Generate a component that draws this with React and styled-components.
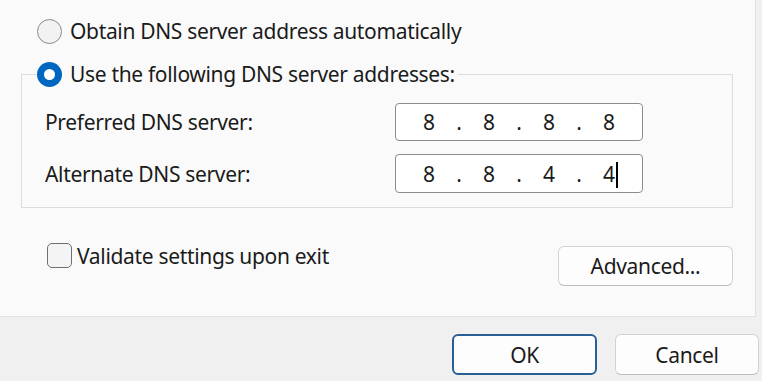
import styled, { createGlobalStyle } from "styled-components";

const GlobalStyle = createGlobalStyle`
  html, body {
    margin: 0;
    padding: 0;
    background: #f0f0f0;
  }
  * {
    box-sizing: border-box;
  }
`;

const Dialog = styled.div`
  width: 762px;
  height: 381px;
  background: #f0f0f0;
  font-family: "Noto Sans", "Open Sans", sans-serif;
  font-size: 21px;
  letter-spacing: -0.33px;
  color: #1b1b1b;
  overflow: hidden;
`;

const Page = styled.div`
  width: 756px;
  height: 317px;
  background: #fafafa;
  border-right: 1px solid #e2e2e2;
  border-bottom: 1px solid #e2e2e2;
  padding-top: 19px;
`;

const OptionRow = styled.label`
  display: flex;
  align-items: center;
  gap: 8px;
  height: 25px;
  margin-left: ${({ $indent }) => $indent || 0}px;
  padding-right: 3px;
  line-height: 25px;
`;

const Radio = styled.span`
  flex: none;
  width: 25px;
  height: 25px;
  border-radius: 50%;
  border: ${({ $checked }) => ($checked ? "none" : "1.5px solid #8a8a8a")};
  background: ${({ $checked }) => ($checked ? "#0067c0" : "#f2f2f2")};
  display: flex;
  align-items: center;
  justify-content: center;

  &::after {
    content: "";
    display: ${({ $checked }) => ($checked ? "block" : "none")};
    width: 11px;
    height: 11px;
    border-radius: 50%;
    background: #ffffff;
  }
`;

const Group = styled.fieldset`
  width: 712px;
  margin: 18px 0 0 21px;
  padding: 16px 0 14px 15px;
  border: 1px solid #dcdcdc;
  border-radius: 0;
`;

const Legend = styled.legend`
  padding: 0;
  margin: 0;
`;

const Fields = styled.div`
  display: grid;
  grid-template-columns: 350px 248px;
  row-gap: 13px;
  align-items: center;
  padding-left: 8px;
`;

const FieldLabel = styled.span`
  line-height: 38px;
`;

const IpBox = styled.div`
  height: ${({ $tall }) => ($tall ? 39 : 38)}px;
  background: #ffffff;
  border: 1.5px solid #8c8c8c;
  border-radius: 4px;
  display: flex;
  align-items: center;
  padding-left: 10px;
  letter-spacing: 0;
`;

const Octet = styled.span`
  width: 46px;
  text-align: center;
`;

const Dot = styled.span`
  width: 14px;
  text-align: center;
`;

const Caret = styled.span`
  display: inline-block;
  width: 2px;
  height: 26px;
  margin-left: 1px;
  margin-right: -3px;
  background: #000;
  vertical-align: -6px;
`;

const BottomRow = styled.div`
  width: 733px;
  display: flex;
  justify-content: space-between;
  align-items: flex-start;
  margin-top: 35px;
  padding-left: 47px;
`;

const CheckRow = styled.label`
  display: flex;
  align-items: center;
  gap: 5px;
  height: 25px;
`;

const Checkbox = styled.span`
  width: 25px;
  height: 25px;
  border: 1.5px solid #6f6f6f;
  border-radius: 5px;
  background: #f4f4f4;
`;

const Button = styled.button`
  width: ${({ $w }) => $w}px;
  height: ${({ $h }) => $h}px;
  margin-top: ${({ $mt }) => $mt || 0}px;
  font: inherit;
  letter-spacing: inherit;
  color: #1b1b1b;
  background: #fdfdfd;
  border: ${({ $primary }) =>
    $primary ? "2px solid #2a5f95" : "1px solid #d2d2d2"};
  border-bottom-color: ${({ $primary }) => ($primary ? "#2a5f95" : "#bdbdbd")};
  border-radius: 6px;
  padding: 0;
`;

const Footer = styled.div`
  display: flex;
  justify-content: flex-end;
  gap: 18px;
  padding: 17px 3px 0 0;
`;

function IpAddress({ parts, caret, tall }) {
  return (
    <IpBox $tall={tall}>
      {parts.flatMap((p, i) => [
        i > 0 && <Dot key={"d" + i}>.</Dot>,
        <Octet key={"o" + i}>
          {p}
          {caret && i === parts.length - 1 && <Caret />}
        </Octet>,
      ])}
    </IpBox>
  );
}

export default function App() {
  return (
    <>
      <GlobalStyle />
      <Dialog>
        <Page>
          <OptionRow $indent={37}>
            <Radio />
            Obtain DNS server address automatically
          </OptionRow>
          <Group>
            <Legend>
              <OptionRow>
                <Radio $checked />
                Use the following DNS server addresses:
              </OptionRow>
            </Legend>
            <Fields>
              <FieldLabel>Preferred DNS server:</FieldLabel>
              <IpAddress parts={["8", "8", "8", "8"]} />
              <FieldLabel>Alternate DNS server:</FieldLabel>
              <IpAddress parts={["8", "8", "4", "4"]} caret tall />
            </Fields>
          </Group>
          <BottomRow>
            <CheckRow>
              <Checkbox />
              Validate settings upon exit
            </CheckRow>
            <Button $w={175} $h={40} $mt={3}>
              Advanced...
            </Button>
          </BottomRow>
        </Page>
        <Footer>
          <Button $primary $w={145} $h={41}>
            OK
          </Button>
          <Button $w={144} $h={41}>
            Cancel
          </Button>
        </Footer>
      </Dialog>
    </>
  );
}
